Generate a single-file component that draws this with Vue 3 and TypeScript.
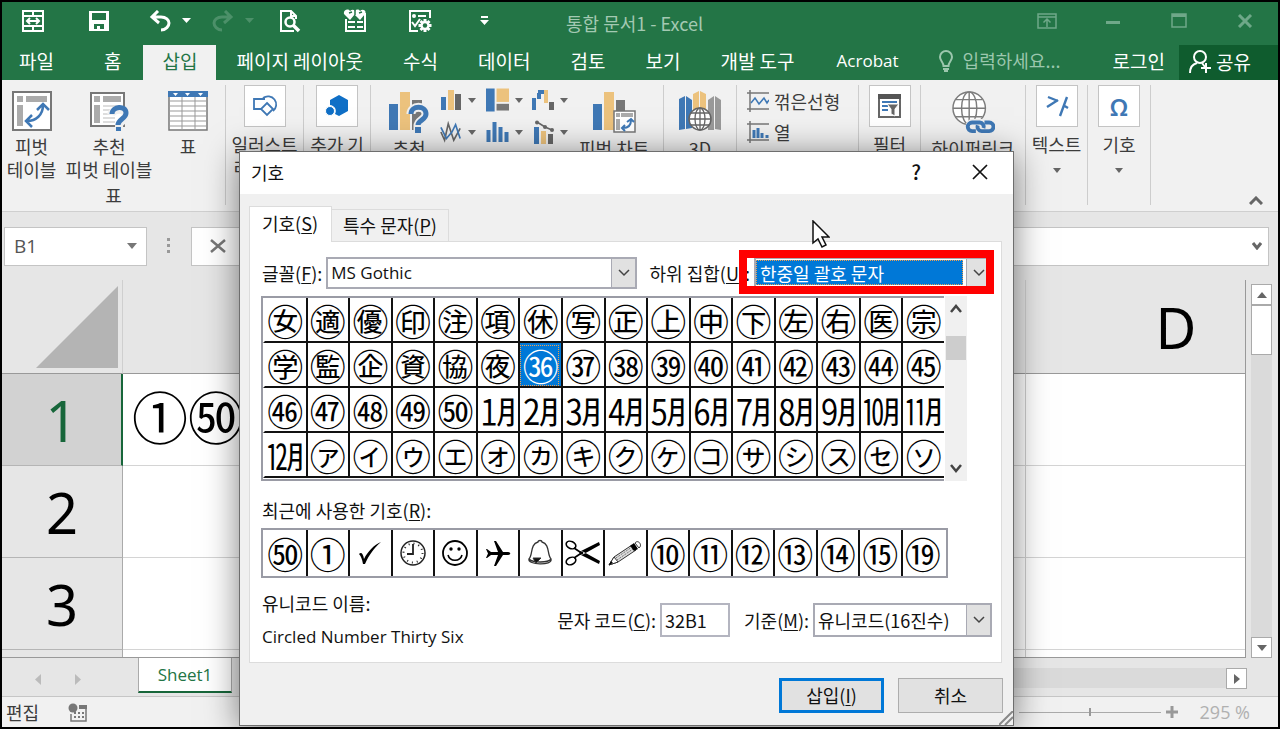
<script setup lang="ts">
import { ref } from 'vue'

const ribbonTabs: string[] = ['페이지 레이아웃', '수식', '데이터', '검토', '보기', '개발 도구']

const symbols: string[] = [
  ...'㊛㊜㊝㊞㊟㊠㊡㊢㊣㊤㊥㊦㊧㊨㊩㊪',
  ...'㊫㊬㊭㊮㊯㊰㊱㊲㊳㊴㊵㊶㊷㊸㊹㊺',
  ...'㊻㊼㊽㊾㊿㋀㋁㋂㋃㋄㋅㋆㋇㋈㋉㋊',
  ...'㋋㋐㋑㋒㋓㋔㋕㋖㋗㋘㋙㋚㋛㋜㋝㋞',
]
const recent: string[] = [
  '㊿', '①', 'check', 'clock', 'smile', 'plane', 'bell', 'scissors', 'pencil',
  '⑩', '⑪', '⑫', '⑬', '⑭', '⑮', '⑲',
]
const selected = ref('㊱')
const charCode = ref('32B1')
const zoom = ref(50)
const rows: { n: number; text: string }[] = [
  { n: 1, text: '①㊿' },
  { n: 2, text: '' },
  { n: 3, text: '' },
]
</script>

<template>
  <div class="window">
    <header class="titlebar">
      <div class="quick">
        <button class="qbtn" aria-label="맞춤">
          <svg width="24" height="24" viewBox="0 0 24 24" fill="none" stroke="#fff" stroke-width="2">
            <path d="M2 2h20v20H2zM2 7h20M2 17h20M12 2v5M12 17v5M6 12h12M9 9l-3 3 3 3M15 9l3 3-3 3" />
          </svg>
        </button>
        <button class="qbtn" aria-label="저장">
          <svg width="22" height="22" viewBox="0 0 22 22"><path fill="#fff" fill-rule="evenodd" d="M1 1h20v20H1zM4 3v7h14V3zM6 14v5h3v-3h3v3h4v-5z" /></svg>
        </button>
        <button class="qbtn" aria-label="실행 취소">
          <svg width="22" height="22" viewBox="0 0 22 22" fill="none" stroke="#fff" stroke-width="3"><path d="M9 1L3 7l7 6M3 7h9c5 0 8 3 8 6s-3 7-8 7" /></svg>
          <svg width="9" height="5" viewBox="0 0 9 5"><path fill="#fff" d="M0 0h9L4.500 5z" /></svg>
        </button>
        <button class="qbtn" aria-label="다시 실행">
          <svg width="22" height="22" viewBox="0 0 22 22" fill="none" stroke="#4c9069" stroke-width="3"><path d="M13 1l6 6-7 6M19 7h-9c-5 0-8 3-8 6s3 7 8 7" /></svg>
          <svg width="9" height="5" viewBox="0 0 9 5"><path fill="#4c9069" d="M0 0h9L4.500 5z" /></svg>
        </button>
        <button class="qbtn" aria-label="인쇄 미리 보기">
          <svg width="22" height="24" viewBox="0 0 22 24" fill="none" stroke="#fff"><path stroke-width="2" d="M15 22H2V2h10l5 5v3M12 2v5h5" /><circle cx="11" cy="13" r="4.500" stroke-width="2.500" /><path stroke-width="3.500" d="M14 16l6 6" /></svg>
        </button>
        <button class="qbtn" aria-label="찾기">
          <svg width="24" height="24" viewBox="0 0 24 24"><path fill="none" stroke="#fff" stroke-width="2" d="M3 10v12h19V4M5 13h7M14 13h6M5 18h7M14 18h6" /><g fill="#fff"><path d="M7 11L1 5c-1-4 4-6 6-3 3-3 7 0 5 3zM17 11l-6-6c0-4 4-6 6-3 3-3 7 0 5 3z" /></g><path fill="none" stroke="#237546" stroke-width="1.500" d="M6 4l3-1M16 4l3-1M12 1v5" /></svg>
        </button>
        <button class="qbtn" aria-label="양식 설정">
          <svg width="24" height="24" viewBox="0 0 24 24"><path fill="none" stroke="#fff" stroke-width="2" d="M22 9V2H2v20h8M10 7h8M4 13l3 4 5-7" /><circle cx="6" cy="7" r="2" fill="#fff" /><g stroke="#fff" stroke-width="3"><path d="M17 10v13M10.500 16.500h13M12.500 12l9 9M21.500 12l-9 9" /></g><circle cx="17" cy="16.500" r="4.500" fill="#fff" /><circle cx="17" cy="16.500" r="2.200" fill="#237546" /></svg>
        </button>
        <button class="qbtn" aria-label="빠른 실행 도구 모음 사용자 지정">
          <svg width="9" height="10" viewBox="0 0 9 10"><path fill="#fff" d="M1 0h7v2H1zM0 4h9L4.500 9z" /></svg>
        </button>
      </div>
      <h1 class="doc-title">통합 문서1 - Excel</h1>
      <div class="win-buttons">
        <button class="qbtn" aria-label="리본 메뉴 표시 옵션">
          <svg width="20" height="16" viewBox="0 0 20 16" fill="none" stroke="#6fa889" stroke-width="1.500"><path d="M1 1h18v14H1zM1 4h18M10 14V6M6.500 9.500L10 6l3.500 3.500" /></svg>
        </button>
        <button class="qbtn" aria-label="최소화"><svg width="14" height="10" viewBox="0 0 14 10"><path fill="#6fa889" d="M0 5h14v3H0z" /></svg></button>
        <button class="qbtn" aria-label="최대화"><svg width="16" height="15" viewBox="0 0 16 15"><path fill="none" stroke="#6fa889" stroke-width="1.500" d="M1 1h14v13H1z" /><path fill="#6fa889" d="M1 1h14v3H1z" /></svg></button>
        <button class="qbtn" aria-label="닫기"><svg width="16" height="14" viewBox="0 0 16 14"><path fill="none" stroke="#6fa889" stroke-width="3" d="M2 1l12 12M14 1L2 13" /></svg></button>
      </div>
    </header>

    <nav class="tabs">
      <button class="tab file">파일</button>
      <button class="tab home">홈</button>
      <button class="tab active">삽입</button>
      <button v-for="t in ribbonTabs" :key="t" class="tab">{{ t }}</button>
      <button class="tab acrobat">Acrobat</button>
      <button class="tab tell">
        <svg width="14" height="22" viewBox="0 0 14 22" fill="none" stroke="#9cc7ae" stroke-width="2"><path d="M4.500 16c0-4-3.500-5-3.500-9a6 6 0 0112 0c0 4-3.500 5-3.500 9z" /><path d="M4 19h6M5 21h4" /></svg>
        <span>입력하세요...</span>
      </button>
      <button class="tab login">로그인</button>
      <button class="share">
        <svg width="24" height="24" viewBox="0 0 24 24" fill="none" stroke="#fff" stroke-width="2"><circle cx="12" cy="7" r="6" /><path d="M2 23c0-6 3-9 7-10M14 13l3 4M18 13v10M13 18h10" /></svg>
        <span>공유</span>
      </button>
    </nav>

    <section class="ribbon">
      <div class="group tables">
        <div class="items">
          <button class="item">
            <svg width="40" height="40" viewBox="0 0 40 40"><path fill="#fff" stroke="#777" stroke-width="2" d="M1 1h38v38H1z" /><path fill="#ababab" d="M5 5h6v6H5zM14 5h21v6H14zM5 14h6v21H5z" /><path fill="none" stroke="#3f78b5" stroke-width="2.500" d="M31 14c0 10-7 16-16 16M25 19l6-6 6 6M20 24l-6 6 6 6" /></svg>
            <span>피벗<br>테이블</span>
          </button>
          <button class="item">
            <svg width="40" height="40" viewBox="0 0 40 40"><path fill="#fff" stroke="#777" stroke-width="2" d="M2 2h33v33H2z" /><path fill="#ababab" d="M5 5h6v6H5zM14 5h18v6H14zM5 14h6v18H5z" /><path stroke="#bbb" d="M14 15h17M14 19h17M14 23h12M14 27h12M14 31h12" /><path fill="none" stroke="#f0f0f0" stroke-width="8" d="M22 24c1-6 15-8 15 0 0 6-7 6-7 11v5" /><path fill="none" stroke="#3f78b5" stroke-width="5" d="M23 23c0-8 14-9 14-1 0 6-8 6-8 12" /><path fill="#3f78b5" d="M27 36h5v4h-5z" /></svg>
            <span>추천<br>피벗 테이블</span>
          </button>
          <button class="item">
            <svg width="40" height="40" viewBox="0 0 40 40"><path fill="#fff" stroke="#777" stroke-width="1.500" d="M1 1h38v38H1z" /><path stroke="#999" d="M1 10h38M1 15h38M1 20h38M1 25h38M1 30h38M1 35h38M14 6v33M27 6v33" /><path fill="#3f78b5" d="M0 0h40v6H0z" /><path fill="#fff" d="M5 2h5L7.500 5zM17 2h5l-2.500 3zM30 2h5l-2.500 3z" /></svg>
            <span>표</span>
          </button>
        </div>
        <div class="caption">표</div>
      </div>
      <div class="group boxed">
        <button class="item">
          <span class="box"><svg width="26" height="24" viewBox="0 0 26 24" fill="none" stroke="#3f78b5" stroke-width="1.800"><path d="M9 15H2V5h11" /><path d="M11 4a8 8 0 1110 13" /><path fill="#fff" d="M15 9l6 6-6 6-6-6z" /></svg></span>
          <span>일러스트<br>레이션 <svg width="8" height="5" viewBox="0 0 8 5"><path fill="#666" d="M0 0h8L4 5z" /></svg></span>
        </button>
      </div>
      <div class="group boxed addin">
        <button class="item">
          <span class="box"><svg width="24" height="24" viewBox="0 0 24 24" fill="#0f6fc6"><path d="M14 1l9 5v11l-9 5-4-2a6 6 0 00-5-9V6z" /><circle cx="5" cy="17" r="4.500" stroke="#fff" /></svg></span>
          <span>추가 기</span>
        </button>
      </div>
      <div class="group charts">
        <button class="item">
          <svg width="40" height="42" viewBox="0 0 40 42"><path fill="#3f78b5" d="M0 13h9v26H0z" /><path fill="#ecc27d" d="M11 1h10v38H11z" /><path fill="#777" d="M23 9h10v30H23z" /><path fill="none" stroke="#f0f0f0" stroke-width="9" d="M22 23c0-9 15-9 15 0 0 6-8 6-8 12v7" /><path fill="none" stroke="#3f78b5" stroke-width="5" d="M22 23c0-9 15-9 15 0 0 6-8 6-8 11" /><path fill="#3f78b5" d="M26 36h6v6h-6z" /></svg>
          <span>추천</span>
        </button>
        <div class="mini-grid">
          <button class="mini" aria-label="세로 막대형"><svg width="22" height="22" viewBox="0 0 22 22"><path fill="#3f78b5" d="M1 8h5v13H1z" /><path fill="#ecc27d" d="M8 1h6v20H8z" /><path fill="#666" d="M15 5h6v16h-6z" /></svg><i></i></button>
          <button class="mini" aria-label="계층 구조"><svg width="23" height="24" viewBox="0 0 24 24"><path fill="#3f78b5" d="M0 0h9v24H0z" /><path fill="#ecc27d" d="M11 0h13v14H11z" /><path fill="#777" d="M11 16h13v7H11z" /></svg><i></i></button>
          <button class="mini" aria-label="폭포"><svg width="22" height="22" viewBox="0 0 22 22"><path fill="#3f78b5" d="M0 9h4v12H0zM5 4h4v6H5zM6 1h6v4H6z" /><path fill="#ecc27d" d="M12 1h4v13h-4z" /><path fill="#666" d="M17 13h5v8h-5z" /></svg><i></i></button>
          <button class="mini" aria-label="꺾은선형 차트"><svg width="22" height="22" viewBox="0 0 24 22" fill="none" stroke-width="1.800"><path stroke="#666" d="M1 11l4 9L9 2l6 18 7-13" /><path stroke="#3f78b5" d="M1 6l6 12 6-7 4-8 5 15" /></svg><i></i></button>
          <button class="mini" aria-label="통계"><svg width="23" height="20" viewBox="0 0 22 20"><path fill="#3f78b5" d="M0 8h4v12H0zM6 0h4v20H6zM12 5h4v15h-4zM18 10h4v10h-4z" /></svg><i></i></button>
          <button class="mini" aria-label="콤보"><svg width="22" height="24" viewBox="0 0 22 24"><path fill="#3f78b5" d="M2 7h5v17H2z" /><path fill="#ecc27d" d="M9 11h5v13H9z" /><path fill="#666" d="M16 14h5v10h-5z" /><path fill="none" stroke="#666" stroke-width="1.500" d="M5 2l8 5 7 3" /><g fill="#666"><circle cx="5" cy="2.500" r="2" /><circle cx="13" cy="7" r="2" /><circle cx="20" cy="10" r="2" /></g></svg><i></i></button>
        </div>
        <button class="item">
          <svg width="43" height="42" viewBox="0 0 43 42"><path fill="#3f78b5" d="M0 13h9v26H0z" /><path fill="#ecc27d" d="M11 1h10v38H11z" /><path fill="#777" d="M23 9h9v12h-9z" /><path fill="#fff" stroke="#777" stroke-width="1.500" d="M21 20h21v21H21z" /><path fill="#ababab" d="M23 22h4v4h-4zM28 22h12v4H28zM23 28h4v11h-4z" /><path fill="none" stroke="#3f78b5" stroke-width="2" d="M38 29c0 5-3 8-8 8M34 31l4-3 3 3M32 34l-3 3 3 3" /></svg>
          <span>피벗 차트</span>
        </button>
      </div>
      <div class="group maps">
        <button class="item">
          <svg width="42" height="42" viewBox="0 0 42 42"><path fill="#3f78b5" d="M0 8l6-3v33l-6 1zM7 5l6 4v28l-6 1z" /><path fill="#ecc27d" d="M14 3l6-3v28h-6zM21 0l6 3v25h-6z" /><path fill="#999" d="M29 9l6-4v34h-6zM36 5l6 4v30l-6-1z" /><circle cx="21" cy="28" r="11" fill="#fff" stroke="#666" stroke-width="1.500" /><path fill="none" stroke="#666" stroke-width="1.300" d="M10 28h22M21 17v22M12 22h18M12 34h18" /><ellipse cx="21" cy="28" rx="5" ry="11" fill="none" stroke="#666" stroke-width="1.300" /></svg>
          <span>3D</span>
        </button>
      </div>
      <div class="group spark">
        <button class="spark-item"><svg width="22" height="22" viewBox="0 0 22 22" fill="none" stroke-width="1.500"><path stroke="#777" d="M0 3h22M0 19h22M3 0v22" /><path stroke="#3f78b5" d="M4 13l4-5 4 6 5-6 3 5 2-3" /></svg>꺾은선형</button>
        <button class="spark-item"><svg width="22" height="22" viewBox="0 0 22 22" fill="none"><path stroke="#777" stroke-width="1.500" d="M0 3h22M0 19h22M3 0v22" /><path stroke="#3f78b5" stroke-width="3" d="M7 9v8M11 7v10M15 12v5M20 14v3" /></svg>열</button>
      </div>
      <div class="group boxed filter">
        <button class="item">
          <span class="box"><svg width="23" height="24" viewBox="0 0 23 24"><path fill="#fff" stroke="#666" stroke-width="2" d="M1 1h21v22H1z" /><path fill="#555" d="M0 0h23v5H0z" /><path stroke="#3f78b5" stroke-width="2" d="M4 8h15M4 12h6M4 16h6" /><path fill="#666" stroke="#fff" d="M9 10h12l-4 5v7l-4-2v-5z" /></svg></span>
          <span>필터</span>
        </button>
      </div>
      <div class="group link">
        <button class="item">
          <svg width="44" height="42" viewBox="0 0 46 44"><g fill="none" stroke="#7d7d7d" stroke-width="1.500"><circle cx="19" cy="18" r="17" fill="#fff" /><ellipse cx="19" cy="18" rx="8" ry="17" /><path d="M2 18h34M19 1v34M5 9h28M5 27h28" /></g><g fill="none" stroke="#f0f0f0" stroke-width="8"><rect x="19" y="33" width="15" height="8" rx="4" /><rect x="29" y="33" width="14" height="8" rx="4" /></g><g fill="none" stroke="#3f78b5" stroke-width="4"><path d="M26 42h-4a4.500 4.500 0 010-9h8a4.500 4.500 0 014 6" /><path d="M35 33h5a4.500 4.500 0 010 9h-8a4.500 4.500 0 01-4-6" /></g></svg>
          <span>하이퍼링크</span>
        </button>
      </div>
      <div class="group boxed text">
        <button class="item">
          <span class="box"><svg width="26" height="26" viewBox="0 0 26 26" fill="none" stroke="#3f78b5" stroke-width="2.400"><path d="M4 4l10 4M14 7L3 14M23 4l-7 19M19 12l5 3" /></svg></span>
          <span>텍스트</span>
          <i></i>
        </button>
      </div>
      <div class="group boxed symbol">
        <button class="item">
          <span class="box omega">Ω</span>
          <span>기호</span>
          <i></i>
        </button>
      </div>
      <button class="collapse" aria-label="리본 메뉴 축소"><svg width="14" height="9" viewBox="0 0 14 9"><path fill="none" stroke="#666" stroke-width="3" d="M1 8l6-6 6 6" /></svg></button>
    </section>

    <section class="formula">
      <div class="name-box">
        <input type="text" value="B1" aria-label="이름 상자">
        <svg width="10" height="6" viewBox="0 0 10 6"><path fill="#777" d="M0 0h10L5 6z" /></svg>
      </div>
      <svg class="dots" width="4" height="16" viewBox="0 0 4 16" fill="#999"><path d="M0 0h3v3H0zM0 6h3v3H0zM0 12h3v3H0z" /></svg>
      <div class="entry">
        <svg width="16" height="14" viewBox="0 0 16 14"><path fill="none" stroke="#777" stroke-width="2.500" d="M1 1l14 12M15 1L1 13" /></svg>
        <input type="text" aria-label="수식 입력줄">
        <svg width="10" height="8" viewBox="0 0 10 8"><path fill="none" stroke="#666" stroke-width="3" d="M1 1l4 5 4-5" /></svg>
      </div>
    </section>

    <main class="sheet">
      <div class="cells">
        <table>
          <colgroup><col class="c-head"><col class="c"><col class="c"><col class="c"><col class="c"></colgroup>
          <thead>
            <tr>
              <td class="corner"><svg width="82" height="82" viewBox="0 0 82 82"><path fill="#b4b4b4" d="M82 0v82H0z" /></svg></td>
              <th></th><th></th><th></th><th>D</th>
            </tr>
          </thead>
          <tbody>
            <tr v-for="r in rows" :key="r.n">
              <th :class="{ current: r.n === 1 }">{{ r.n }}</th>
              <td>{{ r.text }}</td><td></td><td></td><td></td>
            </tr>
            <tr><th></th><td></td><td></td><td></td><td></td></tr>
          </tbody>
        </table>
      </div>
      <div class="vscroll">
        <button aria-label="위로"><svg width="10" height="6" viewBox="0 0 10 6"><path fill="#666" d="M0 6h10L5 0z" /></svg></button>
        <div class="vthumb"></div>
        <button class="down" aria-label="아래로"><svg width="10" height="6" viewBox="0 0 10 6"><path fill="#666" d="M0 0h10L5 6z" /></svg></button>
      </div>
    </main>

    <div class="sheet-tabs">
      <div class="navs">
        <button aria-label="이전 시트"><svg width="6" height="11" viewBox="0 0 6 11"><path fill="#bbb" d="M6 0v11L0 5.500z" /></svg></button>
        <button aria-label="다음 시트"><svg width="6" height="11" viewBox="0 0 6 11"><path fill="#bbb" d="M0 0v11l6-5.500z" /></svg></button>
      </div>
      <button class="sheet-tab">Sheet1</button>
      <div class="hscroll"><button aria-label="오른쪽으로"><svg width="6" height="10" viewBox="0 0 6 10"><path fill="#666" d="M0 0v10l6-5z" /></svg></button></div>
    </div>

    <footer class="status">
      <span>편집</span>
      <svg width="20" height="19" viewBox="0 0 20 19" fill="#777"><circle cx="5" cy="5" r="4.500" /><path d="M11 2h8v4h-8z" /><path fill="none" stroke="#777" stroke-width="1.500" d="M3 11v7h15V6" /><path d="M6 9h2v2H6zM10 9h2v2h-2zM14 9h2v2h-2zM6 13h2v2H6zM10 13h2v2h-2zM14 13h2v2h-2z" /></svg>
      <input v-model="zoom" class="zoom" type="range" min="0" max="100" aria-label="확대/축소">
      <button class="plus" aria-label="확대"><svg width="12" height="12" viewBox="0 0 12 12"><path fill="#999" d="M4.500 0h3v4.500H12v3H7.500V12h-3V7.500H0v-3h4.500z" /></svg></button>
      <span class="pct">295 %</span>
    </footer>

    <div class="dialog" role="dialog" aria-labelledby="dlg-title">
      <div class="dlg-head">
        <h2 id="dlg-title">기호</h2>
        <button class="help" aria-label="도움말">?</button>
        <button aria-label="대화 상자 닫기"><svg width="16" height="16" viewBox="0 0 16 16"><path fill="none" stroke="#111" stroke-width="1.700" d="M1 1l14 14M15 1L1 15" /></svg></button>
      </div>
      <div class="dlg-tabs">
        <button class="dlg-tab on">기호(<u>S</u>)</button>
        <button class="dlg-tab">특수 문자(<u>P</u>)</button>
      </div>
      <div class="panel">
        <div class="row fonts">
          <label for="font">글꼴(<u>F</u>):</label>
          <div class="combo font-combo">
            <select id="font"><option>MS Gothic</option></select>
            <span class="arrow"><svg width="12" height="8" viewBox="0 0 12 8"><path fill="none" stroke="#444" stroke-width="1.500" d="M1 1l5 5 5-5" /></svg></span>
          </div>
          <label for="subset" class="subset-label">하위 집합(<u>U</u>):</label>
          <div class="combo subset-combo">
            <select id="subset"><option>한중일 괄호 문자</option></select>
            <span class="arrow"><svg width="12" height="8" viewBox="0 0 12 8"><path fill="none" stroke="#444" stroke-width="1.500" d="M1 1l5 5 5-5" /></svg></span>
            <div class="callout"></div>
          </div>
        </div>
        <div class="symbol-area">
          <div class="symbols">
            <button v-for="s in symbols" :key="s" :class="{ sel: s === selected }" @click="selected = s">{{ s }}</button>
          </div>
          <div class="sscroll">
            <svg width="12" height="9" viewBox="0 0 12 9"><path fill="none" stroke="#444" stroke-width="2.500" d="M1 8l5-6 5 6" /></svg>
            <div class="sthumb"></div>
            <svg width="12" height="9" viewBox="0 0 12 9"><path fill="none" stroke="#444" stroke-width="2.500" d="M1 1l5 6 5-6" /></svg>
          </div>
        </div>
        <div class="recent-label">최근에 사용한 기호(<u>R</u>):</div>
        <div class="recent">
          <button v-for="s in recent" :key="s" :aria-label="s">
            <svg v-if="s === 'check'" width="24" height="24" viewBox="0 0 24 24"><path d="M1 13c2-2 4-1 5 5C10 10 16 4 23 1 16 7 11 14 7 23H5C4 18 3 15 1 13z" /></svg>
            <svg v-else-if="s === 'clock'" width="28" height="28" viewBox="0 0 28 28" fill="none" stroke="#222"><circle cx="14" cy="14" r="12" stroke-width="1.500" /><circle cx="14" cy="14" r="9.500" stroke-dasharray="1 4" stroke-width="2" /><path stroke-width="1.800" d="M14 5v10H8" /></svg>
            <svg v-else-if="s === 'smile'" width="28" height="28" viewBox="0 0 28 28"><circle cx="14" cy="14" r="12" fill="none" stroke="#000" stroke-width="1.800" /><circle cx="10" cy="10" r="1.700" /><circle cx="18" cy="10" r="1.700" /><path fill="none" stroke="#000" stroke-width="1.600" d="M7 16c2 7 12 7 14 0" /></svg>
            <svg v-else-if="s === 'plane'" width="26" height="26" viewBox="0 0 26 26"><path d="M1 9h1l4 3h7L9 1h2l7 11h5c3 0 3 3 0 3h-5l-7 11H9l4-11H6l-4 3H1l2-4.500z" /></svg>
            <svg v-else-if="s === 'bell'" width="28" height="28" viewBox="0 0 28 28" fill="none" stroke="#333"><path stroke-width="1.300" d="M12 3c0-2 4-2 4 0 8 2 5 13 9 17-3 4-18 4-22 0 4-4 1-15 9-17zM3 20c-2 6 24 7 22 0" /><path fill="#111" d="M7 19h8l-5 5z" /></svg>
            <svg v-else-if="s === 'scissors'" width="36" height="26" viewBox="0 0 36 26"><g fill="none" stroke="#000" stroke-width="1.600"><ellipse cx="6" cy="5" rx="5" ry="3.500" transform="rotate(25 6 5)" /><ellipse cx="6" cy="21" rx="5" ry="3.500" transform="rotate(-25 6 21)" /><path d="M9 8l9 6M9 18l9-6" /></g><path d="M14 12L34 2l1 3-18 10zM14 14l20 10 1-3L17 11z" /></svg>
            <svg v-else-if="s === 'pencil'" width="34" height="26" viewBox="0 0 34 26"><path fill="#ddd" stroke="#333" d="M1 25l5-8L24 5l4 5-18 12z" /><path d="M22 6l4-3 4 6-4 2z" /><path fill="#fff" stroke="#333" d="M27 3c3-4 8 2 4 5zM1 25l5-8 4 5z" /><path d="M1 25l2-4 2 2z" /><path stroke="#555" stroke-dasharray="1 1" d="M8 18L24 7M9 20L25 9" /></svg>
            <template v-else>{{ s }}</template>
          </button>
        </div>
        <div class="row info">
          <div class="uname">
            <div>유니코드 이름:</div>
            <div class="latin">Circled Number Thirty Six</div>
          </div>
          <label for="code">문자 코드(<u>C</u>):</label>
          <input id="code" v-model="charCode" type="text" class="code">
          <label for="base" class="base-label">기준(<u>M</u>):</label>
          <div class="combo base-combo">
            <select id="base"><option>유니코드(16진수)</option></select>
            <span class="arrow"><svg width="12" height="8" viewBox="0 0 12 8"><path fill="none" stroke="#444" stroke-width="1.500" d="M1 1l5 5 5-5" /></svg></span>
          </div>
        </div>
      </div>
      <div class="dlg-foot">
        <button class="btn primary">삽입(<u>I</u>)</button>
        <button class="btn">취소</button>
      </div>
      <svg class="grip" width="14" height="14" viewBox="0 0 14 14" fill="none" stroke="#888" stroke-width="2"><path d="M0 14L14 0M6 14l8-8" /></svg>
      <svg class="cursor" width="18" height="29" viewBox="0 0 18 29"><path fill="#fff" stroke="#111" stroke-width="1.500" d="M1 1v22l5-4 4 8 4-2-4-8h7z" /></svg>
    </div>
  </div>
</template>

<style>
body {
  margin: 0;
  overflow: hidden;
}
</style>

<style scoped>
.window {
  position: relative;
  box-sizing: border-box;
  display: flex;
  flex-direction: column;
  height: 100vh;
  border: 2px solid #000;
  overflow: hidden;
  background: #e6e6e6;
  color: #3c3c3c;
  font: 18px/24px "Noto Sans CJK KR", sans-serif;
}
.window * { box-sizing: border-box; }
button, input, select {
  font: inherit;
  color: inherit;
  border: 0;
  margin: 0;
  padding: 0;
  background: none;
  border-radius: 0;
  min-width: 0;
}
select { appearance: none; outline: none; }
svg { flex: none; }
u { text-decoration-thickness: 1px; text-underline-offset: 2px; }

.titlebar { display: flex; height: 43px; background: #237546; align-items: center; padding-bottom: 6px; flex: none; }
.quick { display: grid; grid-template-columns: 62px 70px 72px 54px 60px 70px 60px 68px; }
.qbtn { display: flex; align-items: center; justify-content: center; gap: 11px; height: 30px; }
.doc-title { flex: 1; margin: 0; padding: 4px 0 0 48px; font-size: 18px; font-weight: 400; line-height: 24px; color: #a3c9b2; white-space: nowrap; }
.win-buttons { display: grid; grid-template-columns: repeat(4, 66px); }

.tabs { display: flex; height: 35px; background: #237546; color: #fff; flex: none; font-size: 19px; }
.tab { padding: 0 20px 4px; white-space: nowrap; line-height: 31px; }
.tab.file { padding-left: 17px; }
.tab.home { padding-left: 30px; padding-right: 22px; }
.tab.active { background: #f1f1f1; color: #237546; padding: 0 19px 4px; }
.tab.acrobat { font-family: "Open Sans", sans-serif; font-size: 17px; padding-left: 22px; }
.tab.tell { display: flex; align-items: center; gap: 10px; color: #9cc7ae; font-size: 18px; }
.tab.login { margin-left: auto; padding: 0 14px 4px; }
.share { display: flex; align-items: center; gap: 4px; width: 99px; padding: 0 9px 2px; background: #0f5c2e; line-height: 32px; white-space: nowrap; }

.ribbon { display: flex; height: 132px; flex: none; background: #f1f1f1; border-bottom: 1px solid #cfcfcf; padding-top: 5px; }
.group { display: flex; height: 120px; border-right: 1px solid #cdcdcd; padding-top: 6px; justify-content: center; flex: none; }
.item { display: flex; flex-direction: column; align-items: center; gap: 4px; white-space: nowrap; line-height: 23px; align-self: flex-start; }
.item i, .mini i { width: 0; height: 0; border: 4px solid transparent; border-top: 5px solid #666; border-bottom: 0; }
.item i { margin-top: 6px; }
.tables { flex-direction: column; width: 224px; justify-content: flex-start; }
.items { display: grid; grid-template-columns: 59px 96px 62px; height: 92px; }
.items .item { align-self: start; justify-self: center; }
.caption { text-align: center; line-height: 24px; }
.tables .caption { padding-top: 2px; }
.boxed { padding-top: 0; width: 78px; }
.boxed .item { gap: 6px; }
.box { display: flex; align-items: center; justify-content: center; width: 42px; height: 42px; border: 1px solid #c4c4c4; background: #fff; }
.omega { color: #3f78b5; font-family: "Noto Sans", sans-serif; font-weight: 600; font-size: 24px; }
.addin { width: 67px; }
.charts { width: 293px; gap: 11px; justify-content: flex-start; padding-left: 18px; }
.mini-grid { display: grid; grid-template-columns: 46px 46px 36px; grid-auto-rows: 32px; margin-top: -7px; }
.mini { display: flex; align-items: center; gap: 6px; }
.maps { width: 73px; }
.spark { width: 122px; flex-direction: column; justify-content: flex-start; padding: 0 0 0 10px; }
.spark-item { display: flex; align-items: center; gap: 5px; height: 31px; white-space: nowrap; }
.filter { width: 62px; }
.link { width: 105px; }
.text { width: 62px; }
.symbol { width: 63px; }
.collapse { margin-left: auto; padding-right: 15px; align-self: flex-end; height: 22px; display: flex; align-items: center; }

.formula { display: flex; height: 68px; flex: none; align-items: center; padding: 0 9px 0 2px; }
.name-box { display: flex; align-items: center; width: 143px; height: 39px; background: #fff; border: 1px solid #c4c4c4; padding: 0 9px; }
.name-box input, .entry input { flex: 1; width: 0; height: 35px; font: 19px "Open Sans", sans-serif; color: #555; }
.dots { margin: 0 20px; }
.entry { flex: 1; display: flex; align-items: center; height: 39px; background: #fff; border: 1px solid #c4c4c4; padding: 0 6px 0 18px; }

.sheet { flex: 1; display: flex; min-height: 0; padding-right: 6px; gap: 5px; }
.cells { flex: 1; overflow: hidden; border-right: 1px solid #999; border-bottom: 1px solid #999; }
table { table-layout: fixed; border-collapse: separate; border-spacing: 0; width: 1325px; }
.c-head { width: 121px; }
.c { width: 301px; }
td, th { padding: 0; font-weight: 400; color: #000; height: 92px; line-height: 80px; font-size: 56px; border-right: 1px solid #cfcfcf; border-bottom: 1px solid #d4d4d4; white-space: nowrap; }
th { font-family: "Noto Sans", sans-serif; background: #e6e6e6; }
tbody td { background: #fff; padding: 0 0 10px 9px; font-family: "Noto Sans CJK JP", sans-serif; }
thead th, thead td { height: 94px; border-bottom-color: #999; }
.corner { text-align: right; padding-right: 4px; line-height: 0; }
tbody th { border-right-color: #aaa; border-bottom-color: #b5b5b5; }
tbody th.current { background: #d2d2d2; color: #17663a; border-right: 2px solid #17663a; }
.vscroll { width: 21px; margin-top: 4px; background: #dadada; display: flex; flex-direction: column; }
.vscroll button, .hscroll button { width: 21px; height: 21px; border: 1px solid #aaa; background: #fff; display: flex; align-items: center; justify-content: center; }
.vthumb { height: 50px; border: 1px solid #aaa; background: #fff; }
.vscroll .down { margin-top: auto; }

.sheet-tabs { display: flex; height: 39px; flex: none; border-bottom: 1px solid #c6c6c6; padding-right: 31px; }
.navs { display: flex; width: 136px; gap: 34px; padding-left: 33px; align-items: center; }
.sheet-tab { width: 94px; height: 35px; background: #fff; border: 1px solid #aaa; border-top: 0; border-bottom: 2px solid #17663a; color: #237546; font-family: "Open Sans", sans-serif; font-size: 17px; }
.hscroll { flex: 1; margin: 10px 0 8px 20px; background: #dadada; display: flex; justify-content: flex-end; }

.status { display: flex; align-items: center; height: 30px; flex: none; background: #f1f1f1; padding: 0 28px 0 4px; font-size: 18px; }
.status > svg { margin-left: 29px; }
.zoom { appearance: none; width: 142px; height: 20px; margin-left: auto; background: linear-gradient(#aaa, #aaa) center / 100% 1px no-repeat; }
.zoom::-webkit-slider-thumb { appearance: none; width: 2px; height: 8px; background: #999; }
.plus { display: flex; margin-left: 5px; }
.pct { color: #b0b0b0; margin-left: 22px; font-family: "Open Sans", sans-serif; }

.dialog { position: absolute; left: 237px; top: 149px; width: 775px; border: 1px solid #6e6e6e; background: #f0f0f0; color: #111; box-shadow: 0 4px 32px rgba(0, 0, 0, 0.5); font-size: 18px; padding-bottom: 12px; }
.dlg-head { display: flex; align-items: center; height: 42px; background: #fff; padding: 0 25px 2px 11px; }
.dlg-head h2 { flex: 1; margin: 0; font-size: 18px; font-weight: 400; }
.dlg-head button { display: flex; }
.dlg-head .help { font-size: 20px; margin-right: 51px; font-weight: 500; }
.dlg-tabs { display: flex; align-items: flex-end; padding: 12px 0 0 9px; }
.dlg-tab { height: 32px; padding: 0 11px 2px; border: 1px solid #dcdcdc; border-bottom: 0; border-left: 0; line-height: 28px; white-space: nowrap; }
.dlg-tab.on { position: relative; height: 36px; margin-bottom: -1px; border-left: 1px solid #dcdcdc; background: #fff; padding: 0 13px 4px 12px; }
.panel { margin: 0 11px 0 9px; background: #fff; border: 1px solid #dcdcdc; padding: 15px 9px 8px 12px; }
.row { display: flex; align-items: center; white-space: nowrap; }
.combo { position: relative; display: flex; height: 32px; border: 2px solid #a9aab4; background: #fff; }
.combo select { flex: 1; width: 0; padding-left: 3px; line-height: 24px; }
.arrow { display: flex; align-items: center; justify-content: center; width: 24px; background: #e1e1e1; border-left: 1px solid #a9aab4; }
.font-combo { width: 311px; margin-left: 4px; }
#font { font-family: "Open Sans", "Noto Sans CJK KR", sans-serif; font-size: 17px; }
.subset-label { margin-left: auto; }
.subset-combo { width: 238px; margin-left: 4px; }
.subset-combo select { margin: 1px 3px 2px 0; background: #0078d7; color: #fff; border: 1px dotted #f0a050; }
.callout { position: absolute; inset: -9px -4px -7px -17px; border: 8px solid #f00; pointer-events: none; }
.symbol-area { display: flex; margin: 7px 0 0 -1px; }
.symbols { flex: none; display: grid; grid-template-columns: repeat(16, 1fr); grid-auto-rows: 45px; width: 683px; border: 2px solid #9a9ba5; border-right: 0; padding-bottom: 1px; }
.symbols button, .recent button { display: flex; align-items: center; justify-content: center; font: 36px/44px "Noto Sans CJK JP", sans-serif; color: #000; border-left: 2px solid #111; }
.symbols button { border-bottom: 2px solid #111; }
.symbols button:nth-child(16n + 1), .recent button:first-child { border-left-color: transparent; }
.symbols button.sel { background: #0078d7; color: #fff; outline: 1px dotted #f0a050; outline-offset: -3px; }
.sscroll { width: 22px; background: #f0f0f0; display: flex; flex-direction: column; align-items: center; padding: 8px 0; margin-left: 1px; }
.sthumb { width: 20px; height: 24px; margin: 23px 0 auto; background: #cdcdcd; }
.recent-label { margin-top: 16px; line-height: 26px; }
.recent { display: grid; grid-template-columns: repeat(16, 1fr); width: 687px; height: 50px; margin: 5px 0 0 -1px; border: 2px solid #9a9ba5; padding-right: 3px; }
.info { margin-top: 8px; }
.uname { flex: 1; line-height: 34px; }
.latin { font-family: "Open Sans", sans-serif; font-size: 17px; }
.code { width: 70px; height: 34px; border: 2px solid #b4b5c0; padding-left: 3px; margin-left: 4px; font-size: 18px; }
.base-label { margin-left: 14px; }
.base-combo { width: 179px; height: 34px; margin-left: 4px; }
.dlg-foot { display: flex; justify-content: flex-end; gap: 14px; padding: 15px 10px 0 0; }
.btn { width: 105px; height: 35px; background: #e1e1e1; border: 1px solid #adadad; padding-bottom: 2px; }
.btn.primary { border: 3px solid #0078d7; }
.grip { position: absolute; right: 0; bottom: 0; }
.cursor { position: absolute; left: 572px; top: 68px; }
</style>
